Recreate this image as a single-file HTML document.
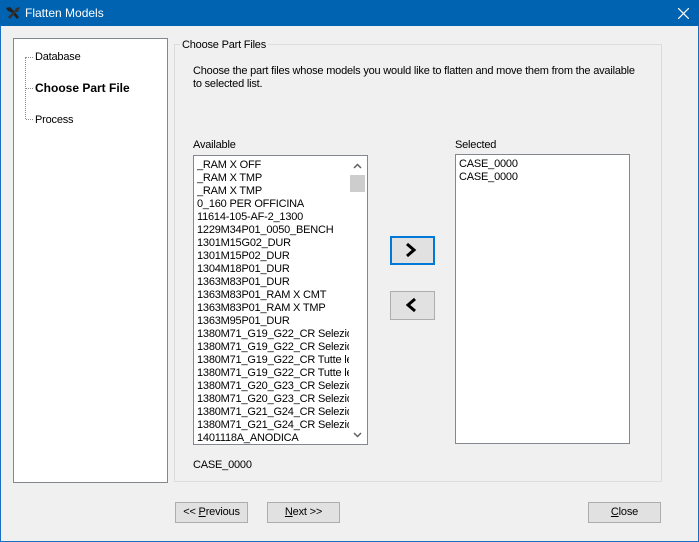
<!DOCTYPE html>
<html><head><style>
*{margin:0;padding:0;box-sizing:border-box}
body{width:699px;height:542px;background:#f0f0f0;font-family:"Liberation Sans",sans-serif;font-size:11px;letter-spacing:-0.2px;color:#000;position:relative;overflow:hidden}
.a{position:absolute}
.title{left:0;top:0;width:699px;height:26px;background:#0063b1;color:#fff;font-size:12px;letter-spacing:0}
.btn{position:absolute;background:#e1e1e1;border:1px solid #adadad;text-align:center;line-height:19px}
.it{height:13px;line-height:13px;white-space:nowrap}
</style></head><body>
<div class="a" style="left:0;top:0;width:699px;height:542px;border:1px solid #1a6fc0"></div>
<div class="a title">
<svg class="a" style="left:5px;top:6px" width="16" height="14" viewBox="0 0 16 14"><path d="M1 2 L5 1 L8 4 L14 11 L12 13 L6 6 L3 5 Z" fill="#222"/><path d="M15 1 L11 2 L10 4 L3 11 L5 13 L11 6 L13 6 Z" fill="#333"/></svg>
<div class="a" style="left:25px;top:6px">Flatten Models</div>
<svg class="a" style="left:678px;top:8px" width="11" height="11"><path d="M0 0L11 11M11 0L0 11" stroke="#fff" stroke-width="1.2"/></svg>
</div>
<div class="a" style="left:13px;top:38px;width:155px;height:445px;background:#fff;border:1px solid #828790"></div>
<div class="a" style="left:25px;top:57px;height:62px;border-left:1px dotted #888"></div>
<div class="a" style="left:26px;top:57px;width:7px;border-top:1px dotted #888"></div>
<div class="a" style="left:26px;top:88px;width:7px;border-top:1px dotted #888"></div>
<div class="a" style="left:26px;top:119px;width:7px;border-top:1px dotted #888"></div>
<div class="a" style="left:35px;top:51px">Database</div>
<div class="a" style="left:35px;top:81px;font-weight:bold;font-size:12px;letter-spacing:0">Choose Part File</div>
<div class="a" style="left:35px;top:114px">Process</div>
<div class="a" style="left:174px;top:44px;width:488px;height:438px;border:1px solid #dcdcdc"></div>
<div class="a" style="left:180px;top:39px;background:#f0f0f0;padding:0 2px">Choose Part Files</div>
<div class="a" style="left:193px;top:65px;line-height:13px">Choose the part files whose models you would like to flatten and move them from the available<br>to selected list.</div>
<div class="a" style="left:193px;top:139px">Available</div>
<div class="a" style="left:193px;top:155px;width:175px;height:290px;background:#fff;border:1px solid #828790;padding:3px 0 0 3px;overflow:hidden">
<div style="width:152px;overflow:hidden">
<div class="it">_RAM X OFF</div><div class="it">_RAM X TMP</div><div class="it">_RAM X TMP</div><div class="it">0_160 PER OFFICINA</div><div class="it">11614-105-AF-2_1300</div><div class="it">1229M34P01_0050_BENCH</div><div class="it">1301M15G02_DUR</div><div class="it">1301M15P02_DUR</div><div class="it">1304M18P01_DUR</div><div class="it">1363M83P01_DUR</div><div class="it">1363M83P01_RAM X CMT</div><div class="it">1363M83P01_RAM X TMP</div><div class="it">1363M95P01_DUR</div><div class="it">1380M71_G19_G22_CR Selezione</div><div class="it">1380M71_G19_G22_CR Selezione</div><div class="it">1380M71_G19_G22_CR Tutte le</div><div class="it">1380M71_G19_G22_CR Tutte le</div><div class="it">1380M71_G20_G23_CR Selezione</div><div class="it">1380M71_G20_G23_CR Selezione</div><div class="it">1380M71_G21_G24_CR Selezione</div><div class="it">1380M71_G21_G24_CR Selezione</div><div class="it">1401118A_ANODICA</div>
</div></div>
<div class="a" style="left:349px;top:156px;width:17px;height:288px;background:#fff"></div>
<div class="a" style="left:350px;top:175px;width:15px;height:17px;background:#cdcdcd"></div>
<svg class="a" style="left:353px;top:163px" width="9" height="6"><path d="M1 5L4.5 1.5L8 5" stroke="#606060" stroke-width="1.5" fill="none"/></svg>
<svg class="a" style="left:353px;top:432px" width="9" height="6"><path d="M1 1L4.5 4.5L8 1" stroke="#606060" stroke-width="1.5" fill="none"/></svg>
<div class="a" style="left:193px;top:459px">CASE_0000</div>
<div class="a" style="left:455px;top:139px">Selected</div>
<div class="a" style="left:455px;top:154px;width:175px;height:290px;background:#fff;border:1px solid #828790;padding:3px 0 0 3px">
<div class="it">CASE_0000</div><div class="it">CASE_0000</div></div>
<div class="btn" style="left:390px;top:236px;width:45px;height:29px;border:2px solid #0078d7"></div>
<svg class="a" style="left:405px;top:242px" width="12" height="16"><path d="M2 2L9 8L2 14" stroke="#000" stroke-width="3" fill="none"/></svg>
<div class="btn" style="left:390px;top:291px;width:45px;height:29px"></div>
<svg class="a" style="left:406px;top:297px" width="12" height="16"><path d="M9 2L2 8L9 14" stroke="#000" stroke-width="3" fill="none"/></svg>
<div class="btn" style="left:175px;top:502px;width:73px;height:21px">&lt;&lt; <u>P</u>revious</div>
<div class="btn" style="left:267px;top:502px;width:73px;height:21px"><u>N</u>ext &gt;&gt;</div>
<div class="btn" style="left:588px;top:502px;width:73px;height:21px"><u>C</u>lose</div>
</body></html>
